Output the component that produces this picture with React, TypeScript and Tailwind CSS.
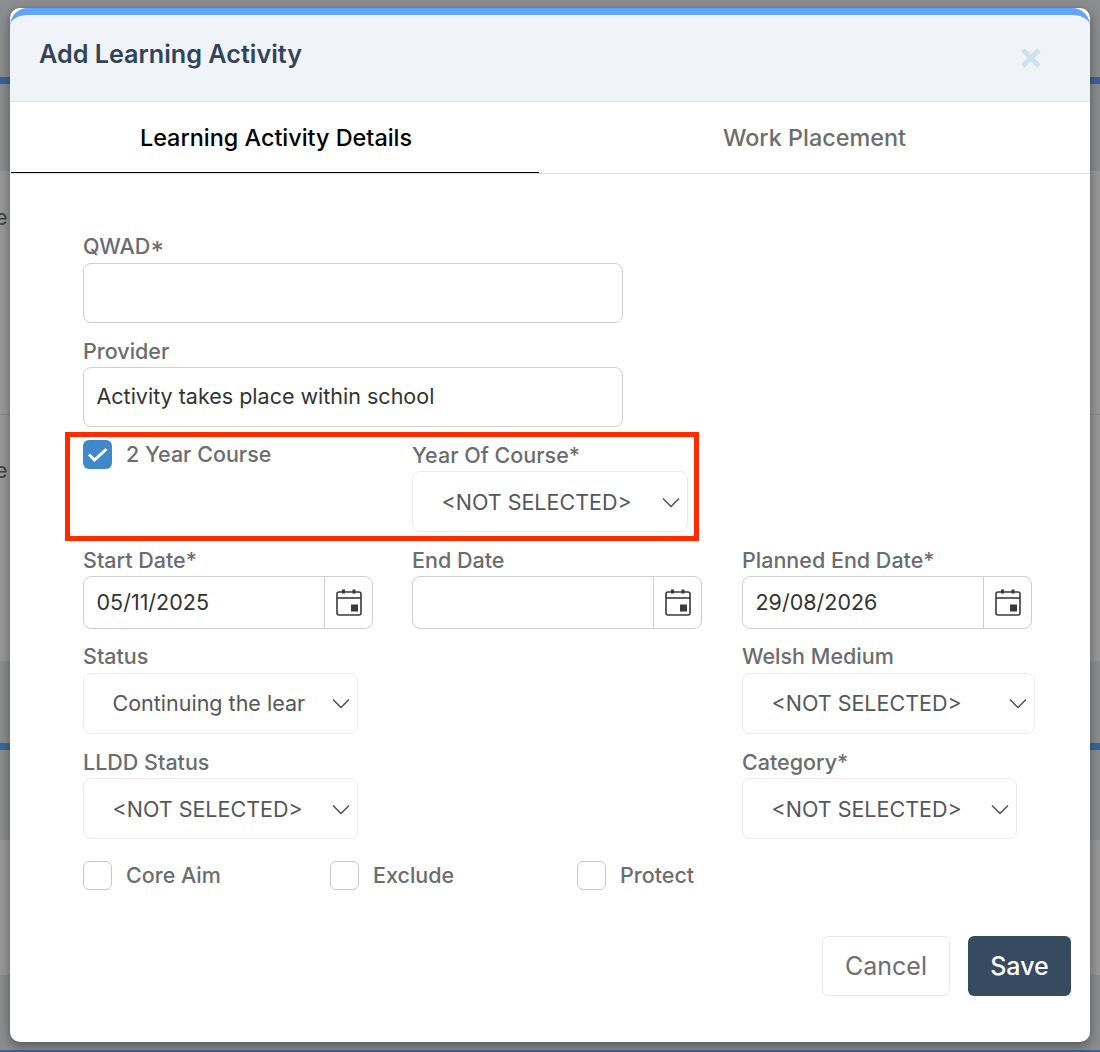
const labelCls = "block text-[21.5px] leading-[24px] font-medium text-[#6b6c70]";

function CalendarIcon() {
  return (
    <svg width="26" height="27" viewBox="0 0 26 27" fill="none">
      <rect x="1" y="3" width="24" height="23" rx="2" stroke="#3a3a3c" strokeWidth="1.6" />
      <path d="M1 9h24" stroke="#3a3a3c" strokeWidth="1.6" />
      <rect x="6" y="0.5" width="3" height="4" fill="#3a3a3c" />
      <rect x="16.5" y="0.5" width="3" height="4" fill="#3a3a3c" />
      <rect x="15" y="15.5" width="7" height="7" fill="#3a3a3c" />
    </svg>
  );
}

function Chevron() {
  return (
    <svg width="18" height="11" viewBox="0 0 18 11" fill="none" className="shrink-0">
      <path d="M1 1.5L9 9.5l8-8" stroke="#4a4a4e" strokeWidth="1.4" />
    </svg>
  );
}

function DateField({ label, value, className }: { label: string; value?: string; className?: string }) {
  return (
    <div className={className}>
      <label className={labelCls}>{label}</label>
      <div className="mt-[4px] flex h-[53px] w-[290px] rounded-[8px] border border-[#cfcfcf] bg-white">
        <div className="flex-1 px-[12.5px] text-[21.5px] leading-[51px] text-[#333]">{value}</div>
        <div className="flex w-[48px] items-center justify-center border-l border-[#cfcfcf]">
          <CalendarIcon />
        </div>
      </div>
    </div>
  );
}

function SelectField({ label, value, boxCls, className }: { label: string; value: string; boxCls: string; className?: string }) {
  return (
    <div className={className}>
      <label className={labelCls}>{label}</label>
      <div className={`flex h-[61px] items-center justify-between rounded-[8px] border border-[#ebebeb] bg-white pl-[28.5px] pr-[7px] text-[21.5px] text-[#55565a] ${boxCls}`}>
        <span className="whitespace-nowrap">{value}</span>
        <Chevron />
      </div>
    </div>
  );
}

function Check({ label, checked, className }: { label: string; checked?: boolean; className?: string }) {
  return (
    <div className={`flex items-center gap-[14px] ${className ?? ""}`}>
      {checked ? (
        <div className="h-[29px] w-[29px] rounded-[6px] bg-[#3f88c9]">
          <svg width="29" height="29" viewBox="0 0 29 29" fill="none">
            <path d="M6 14.5l5.5 5.5L23.5 9" stroke="white" strokeWidth="3" />
          </svg>
        </div>
      ) : (
        <div className="h-[29px] w-[29px] rounded-[6px] border border-[#c9c9c9] bg-white" />
      )}
      <span className="-mt-[2px] text-[21.5px] font-medium leading-[24px] text-[#6b6c70]">{label}</span>
    </div>
  );
}

export default function App() {
  return (
    <div className="relative h-[1052px] w-[1100px] overflow-hidden bg-[#8c8d8f] font-['Inter',sans-serif]">
      {/* page behind the dialog */}
      <div className="flex h-full flex-col">
        <div className="h-[77px]" />
        <div className="h-[7px] bg-[#3a659b]" />
        <div className="h-[87px]" />
        <div className="h-[244px] border-b border-[#8a8a8a] bg-[#999999] pt-[33px] text-[21.5px] leading-[26px] text-[#444]">
          <span className="-ml-[5px] block">e</span>
        </div>
        <div className="h-[246px] bg-[#999999] pt-[42px] text-[21.5px] leading-[26px] text-[#444]">
          <span className="-ml-[5px] block">e</span>
        </div>
        <div className="h-[82px] bg-[#8c8d8f]" />
        <div className="h-[7px] bg-[#3a659b]" />
        <div className="h-[90px] bg-[#8c8d8f]" />
        <div className="h-[135px] bg-[#999999]" />
        <div className="flex-1 bg-[#8c8d8f]" />
        <div className="h-[2px] bg-[#3a659b]" />
      </div>

      {/* dialog */}
      <div className="absolute left-[10px] top-[8px] flex h-[1034px] w-[1080px] flex-col overflow-hidden rounded-[10px] bg-white shadow-[0_4px_12px_rgba(0,0,0,0.4)]">
        <div className="flex h-[94px] shrink-0 items-center justify-between rounded-t-[18px] border-t-[7px] border-b border-t-[#60a5fa] border-b-[#e5e7eb] bg-[#f0f4f9] pb-[6px] pl-[29px] pr-[48px]">
          <h1 className="text-[25.2px] font-semibold text-[#334459]">Add Learning Activity</h1>
          <svg width="22" height="22" viewBox="0 0 22 22" fill="none" className="mt-[6px]">
            <path d="M3 3l16 16M19 3L3 19" stroke="#cde2ef" strokeWidth="5" />
          </svg>
        </div>

        <div className="flex h-[72px] shrink-0 border-b border-[#dddddd] pt-[1px] text-[23.4px] font-medium">
          <div className="ml-px flex w-[528px] items-center justify-center border-b border-black pl-[2px] text-black">Learning Activity Details</div>
          <div className="flex flex-1 items-center justify-center text-[#6d6d6d]">Work Placement</div>
        </div>

        <div className="relative flex-1 px-[73px] pt-[60px]">
          <label className={`${labelCls} [font-feature-settings:'case']`}>QWAD*</label>
          <div className="mt-[5px] h-[60px] w-[540px] rounded-[8px] border border-[#cfcfcf]" />

          <label className={`${labelCls} mt-[16px]`}>Provider</label>
          <div className="mt-[4px] h-[60px] w-[540px] rounded-[8px] border border-[#cfcfcf] px-[12.5px] text-[21.5px] leading-[57px] text-[#333]">
            Activity takes place within school
          </div>

          <div className="mt-[13px] flex h-[110px]">
            <Check label="2 Year Course" checked className="h-[29px] w-[329px] shrink-0" />
            <SelectField label="Year Of Course*" value="<NOT SELECTED>" boxCls="mt-[4px] w-[276px] pt-[1px]" className="mt-[3px]" />
          </div>

          <div className="-mt-[2px] flex gap-[39px]">
            <DateField label="Start Date*" value="05/11/2025" />
            <DateField label="End Date" />
            <DateField label="Planned End Date*" value="29/08/2026" className="ml-px" />
          </div>

          <div className="mt-[15px] flex">
            <SelectField label="Status" value="Continuing the lear" boxCls="mt-[5px] w-[275px]" className="w-[659px] shrink-0" />
            <SelectField label="Welsh Medium" value="<NOT SELECTED>" boxCls="mt-[5px] w-[293px]" className="shrink-0" />
          </div>

          <div className="mt-[16px] flex">
            <SelectField label="LLDD Status" value="<NOT SELECTED>" boxCls="mt-[4px] w-[275px] pt-[1px]" className="w-[659px] shrink-0" />
            <SelectField label="Category*" value="<NOT SELECTED>" boxCls="mt-[4px] w-[275px] pt-[1px]" className="shrink-0" />
          </div>

          <div className="mt-[22px] flex">
            <Check label="Core Aim" className="w-[247px]" />
            <Check label="Exclude" className="w-[247px]" />
            <Check label="Protect" />
          </div>

          <div className="absolute bottom-[46px] right-[19px] flex gap-[18px] text-[25px]">
            <button className="h-[60px] w-[128px] rounded-[6px] border border-[#e8e8e8] pt-[2px] text-[#6d6e72]">Cancel</button>
            <button className="h-[60px] w-[103px] rounded-[6px] bg-[#364b60] pt-[2px] font-medium text-white">Save</button>
          </div>
        </div>
      </div>

      {/* red highlight annotation */}
      <div className="pointer-events-none absolute left-[65px] top-[432px] h-[109px] w-[634px] border-[5px] border-[#ff2a00]" />
    </div>
  );
}
